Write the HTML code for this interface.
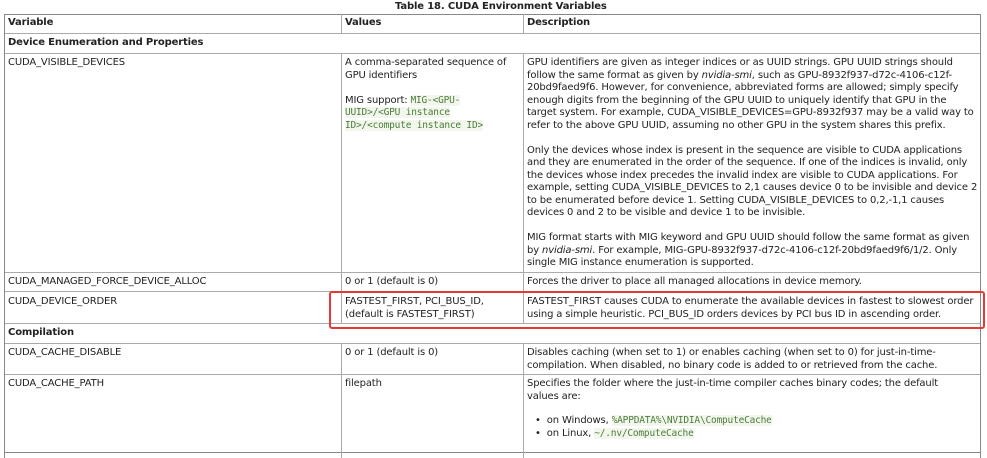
<!DOCTYPE html>
<html><head><meta charset="utf-8"><style>
body{margin:0;width:987px;height:458px;background:#fff;overflow:hidden;position:relative;font-family:"DejaVu Sans","Liberation Sans",sans-serif;font-size:10px;color:#222;}
.h{position:absolute;height:1px;background:#aaa;left:4px;width:977px}
.v{position:absolute;width:1px;background:#aaa}
.t{position:absolute;line-height:12.5px;white-space:nowrap;letter-spacing:-0.15px}
b{font-weight:bold}
code{font-family:"DejaVu Sans Mono","Liberation Mono",monospace;font-size:9.5px;color:#4b7d3a;background:#f3f6ec;letter-spacing:-0.2px}
i{font-style:italic}
</style></head><body>
<div class="t" style="left:395px;top:1px;font-weight:bold;">Table 18. CUDA Environment Variables</div>
<div class="h" style="top:14px;background:#888"></div>
<div class="h" style="top:33px"></div>
<div class="h" style="top:53px"></div>
<div class="h" style="top:272px"></div>
<div class="h" style="top:291px"></div>
<div class="h" style="top:323px"></div>
<div class="h" style="top:343px"></div>
<div class="h" style="top:374px"></div>
<div class="h" style="top:452px;background:#888"></div>
<div class="v" style="left:4px;top:14px;height:444px;background:#888"></div>
<div class="v" style="left:980px;top:14px;height:444px;background:#888"></div>
<div class="v" style="left:341px;top:14px;height:19px"></div>
<div class="v" style="left:523px;top:14px;height:19px"></div>
<div class="v" style="left:341px;top:53px;height:270px"></div>
<div class="v" style="left:523px;top:53px;height:270px"></div>
<div class="v" style="left:341px;top:343px;height:115px"></div>
<div class="v" style="left:523px;top:343px;height:115px"></div>

<div class="t" style="left:8px;top:17px"><b>Variable</b></div>
<div class="t" style="left:345px;top:17px"><b>Values</b></div>
<div class="t" style="left:527px;top:17px"><b>Description</b></div>
<div class="t" style="left:8px;top:37px"><b>Device Enumeration and Properties</b></div>

<div class="t" style="left:8px;top:57px">CUDA_VISIBLE_DEVICES</div>
<div class="t" style="left:345px;top:57px">A comma-separated sequence of<br>GPU identifiers<br><br>MIG support: <code>MIG-&lt;GPU-</code><br><code>UUID&gt;/&lt;GPU instance</code><br><code>ID&gt;/&lt;compute instance ID&gt;</code></div>
<div class="t" style="left:527px;top:57px">GPU identifiers are given as integer indices or as UUID strings. GPU UUID strings should<br>follow the same format as given by <i>nvidia-smi</i>, such as GPU-8932f937-d72c-4106-c12f-<br>20bd9faed9f6. However, for convenience, abbreviated forms are allowed; simply specify<br>enough digits from the beginning of the GPU UUID to uniquely identify that GPU in the<br>target system. For example, CUDA_VISIBLE_DEVICES=GPU-8932f937 may be a valid way to<br>refer to the above GPU UUID, assuming no other GPU in the system shares this prefix.<br><br>Only the devices whose index is present in the sequence are visible to CUDA applications<br>and they are enumerated in the order of the sequence. If one of the indices is invalid, only<br>the devices whose index precedes the invalid index are visible to CUDA applications. For<br>example, setting CUDA_VISIBLE_DEVICES to 2,1 causes device 0 to be invisible and device 2<br>to be enumerated before device 1. Setting CUDA_VISIBLE_DEVICES to 0,2,-1,1 causes<br>devices 0 and 2 to be visible and device 1 to be invisible.<br><br>MIG format starts with MIG keyword and GPU UUID should follow the same format as given<br>by <i>nvidia-smi</i>. For example, MIG-GPU-8932f937-d72c-4106-c12f-20bd9faed9f6/1/2. Only<br>single MIG instance enumeration is supported.</div>

<div class="t" style="left:8px;top:276px">CUDA_MANAGED_FORCE_DEVICE_ALLOC</div>
<div class="t" style="left:345px;top:276px">0 or 1 (default is 0)</div>
<div class="t" style="left:527px;top:276px">Forces the driver to place all managed allocations in device memory.</div>

<div class="t" style="left:8px;top:296px">CUDA_DEVICE_ORDER</div>
<div class="t" style="left:345px;top:296px">FASTEST_FIRST, PCI_BUS_ID,<br>(default is FASTEST_FIRST)</div>
<div class="t" style="left:527px;top:296px">FASTEST_FIRST causes CUDA to enumerate the available devices in fastest to slowest order<br>using a simple heuristic. PCI_BUS_ID orders devices by PCI bus ID in ascending order.</div>

<div class="t" style="left:8px;top:327px"><b>Compilation</b></div>

<div class="t" style="left:8px;top:347px">CUDA_CACHE_DISABLE</div>
<div class="t" style="left:345px;top:347px">0 or 1 (default is 0)</div>
<div class="t" style="left:527px;top:347px">Disables caching (when set to 1) or enables caching (when set to 0) for just-in-time-<br>compilation. When disabled, no binary code is added to or retrieved from the cache.</div>

<div class="t" style="left:8px;top:378px">CUDA_CACHE_PATH</div>
<div class="t" style="left:345px;top:378px">filepath</div>
<div class="t" style="left:527px;top:378px">Specifies the folder where the just-in-time compiler caches binary codes; the default<br>values are:</div>
<div class="t" style="left:535px;top:415px">• &nbsp;on Windows, <code>%APPDATA%\NVIDIA\ComputeCache</code><br>• &nbsp;on Linux, <code>~/.nv/ComputeCache</code></div>

<div style="position:absolute;left:329px;top:291px;width:652px;height:34px;border:2px solid #e53935;border-radius:3px"></div>
</body></html>
